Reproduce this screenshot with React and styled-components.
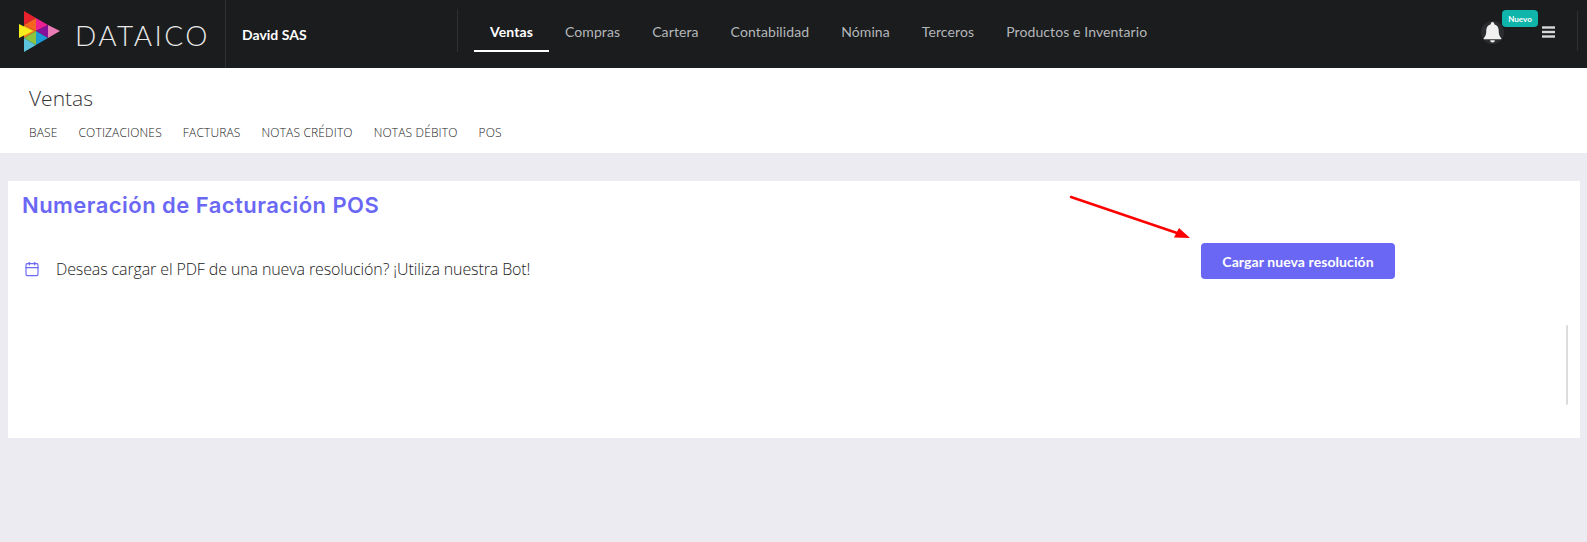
import React from 'react';
import styled, { createGlobalStyle } from 'styled-components';

const GlobalStyle = createGlobalStyle`
  html, body {
    margin: 0;
    padding: 0;
    background: #ecebf1;
    font-family: 'Open Sans', sans-serif;
  }
`;

const menu = ['Ventas', 'Compras', 'Cartera', 'Contabilidad', 'Nómina', 'Terceros', 'Productos e Inventario'];
const tabs = ['BASE', 'COTIZACIONES', 'FACTURAS', 'NOTAS CRÉDITO', 'NOTAS DÉBITO', 'POS'];

const triangles = [
  ['24,11 36,18 24,25', '#e7222c'],
  ['36,18 36,31 24,25', '#f5651f'],
  ['24,25 36,31 24,38', '#f5821f'],
  ['36,18 48,25 36,31', '#ec1f93'],
  ['48,25 48,38 36,31', '#86109a'],
  ['48,25 60,31 48,38', '#ea7cb5'],
  ['36,31 48,38 36,45', '#1c9ad6'],
  ['36,31 36,45 24,38', '#8cc63f'],
  ['24,38 36,45 24,52', '#5cc4dc'],
  ['19,24 33,31 19,38', '#f6ee1c'],
];

export default function App () {
  return (
    <Page>
      <GlobalStyle />
      <Header>
        <Brand>
          <svg width="62" height="68" viewBox="0 0 62 68" aria-hidden="true">
            {triangles.map(([points, fill]) => (
              <polygon key={points} points={points} fill={fill} />
            ))}
          </svg>
          <BrandName>DATAICO</BrandName>
        </Brand>
        <Company>David SAS</Company>
        <Menu>
          {menu.map((item, i) => (
            <MenuItem key={item} $active={i === 0}>{item}</MenuItem>
          ))}
        </Menu>
        <Tools>
          <Bell>
            <svg width="24" height="24" viewBox="0 0 24 24" fill="#f0f0f0" aria-hidden="true">
              <path d="M12 1.500a1.800 1.800 0 0 0-1.800 1.800v.6C7 4.700 5.500 7.300 5.500 10.500c0 4.500-1 6.200-2.700 7.900v1.100h18.400v-1.100c-1.700-1.700-2.700-3.400-2.700-7.900 0-3.200-1.500-5.800-4.700-6.600v-.6A1.800 1.800 0 0 0 12 1.500z" />
              <path d="M9.500 20.500a2.500 2.500 0 0 0 5 0z" />
            </svg>
          </Bell>
          <Badge>Nuevo</Badge>
          <Burger width="13" height="12" viewBox="0 0 13 12" fill="#d8d8d8" aria-hidden="true">
            <rect y="0.300" width="13" height="2.400" />
            <rect y="4.800" width="13" height="2.400" />
            <rect y="9.300" width="13" height="2.400" />
          </Burger>
          <ToolsEdge />
        </Tools>
      </Header>

      <SubHeader>
        <PageTitle>Ventas</PageTitle>
        <Tabs>
          {tabs.map(tab => (
            <Tab key={tab}>{tab}</Tab>
          ))}
        </Tabs>
      </SubHeader>

      <Card>
        <CardTitle>Numeración de Facturación POS</CardTitle>
        <CardRow>
          <Notice>
            <svg width="16" height="16" viewBox="0 0 24 24" fill="none" stroke="#6a67f5" strokeWidth="1.7" strokeLinecap="round" strokeLinejoin="round" aria-hidden="true">
              <rect x="3" y="4" width="18" height="18" rx="2" />
              <line x1="16" y1="2" x2="16" y2="6" />
              <line x1="8" y1="2" x2="8" y2="6" />
              <line x1="3" y1="10" x2="21" y2="10" />
            </svg>
            <NoticeText>Deseas cargar el PDF de una nueva resolución? ¡Utiliza nuestra Bot!</NoticeText>
          </Notice>
          <UploadButton>Cargar nueva resolución</UploadButton>
        </CardRow>
        <Arrow width="140" height="60" viewBox="0 0 140 60" aria-hidden="true">
          <line x1="2" y1="2" x2="111" y2="39" stroke="#fe0000" strokeWidth="2.500" strokeLinecap="round" />
          <polygon points="121,43 105,42.500 110,33" fill="#fe0000" />
        </Arrow>
        <ScrollEdge />
      </Card>
    </Page>
  );
}

const Page = styled.div`
  width: 1587px;
  height: 542px;
  overflow: hidden;
  background: #ecebf1;
`;

const Header = styled.header`
  display: flex;
  align-items: stretch;
  height: 68px;
  background: #1b1c1e;
`;

const Brand = styled.div`
  display: flex;
  align-items: center;
  width: 226px;
  box-sizing: border-box;
  border-right: 1px solid #2e2f32;
`;

const BrandName = styled.span`
  margin: 1px 0 0 13px;
  font-family: 'Lato', sans-serif;
  font-size: 28px;
  font-weight: 300;
  letter-spacing: 2.4px;
  color: #e8e8e8;
`;

const Company = styled.div`
  display: flex;
  align-items: center;
  width: 231px;
  box-sizing: border-box;
  padding-left: 16px;
  font-family: 'Lato', sans-serif;
  font-size: 14px;
  font-weight: 700;
  color: #fff;
`;

const Menu = styled.nav`
  display: flex;
  height: 43px;
  margin-top: 9px;
  padding-left: 16px;
  border-left: 1px solid #2e2f32;
`;

const MenuItem = styled.a`
  display: flex;
  align-items: center;
  height: 43px;
  padding: 3px 16px 0;
  box-sizing: border-box;
  border-bottom: 2px solid ${p => (p.$active ? '#fff' : 'transparent')};
  font-family: 'Lato', sans-serif;
  font-size: 14px;
  letter-spacing: 0.1px;
  font-weight: ${p => (p.$active ? 700 : 400)};
  color: ${p => (p.$active ? '#fff' : '#b4b7ba')};
`;

const Tools = styled.div`
  position: relative;
  display: flex;
  align-items: center;
  margin-left: auto;
  padding: 0 10px 4px 0;
`;

const Bell = styled.div`
  display: flex;
  align-items: center;
  justify-content: center;
  width: 23px;
  height: 23px;
  margin-right: 38px;
  border-radius: 50%;
  background: #2c2d30;
`;

const Badge = styled.span`
  position: absolute;
  top: 10px;
  right: 49px;
  display: flex;
  align-items: center;
  justify-content: center;
  width: 36px;
  height: 17px;
  border-radius: 4px;
  background: #0fb5ab;
  font-family: 'Lato', sans-serif;
  font-size: 8px;
  font-weight: 700;
  color: #fff;
`;

const Burger = styled.svg`
  margin-right: 22px;
`;

const ToolsEdge = styled.div`
  position: absolute;
  top: 11px;
  right: 9px;
  width: 1px;
  height: 40px;
  background: #2e2f32;
`;

const SubHeader = styled.section`
  height: 85px;
  box-sizing: border-box;
  padding: 17px 29px 0;
  background: #fff;
`;

const PageTitle = styled.h1`
  margin: 0;
  font-size: 21px;
  line-height: 27px;
  font-weight: 300;
  color: #333;
`;

const Tabs = styled.div`
  display: flex;
  gap: 21px;
  margin-top: 13px;
`;

const Tab = styled.a`
  font-size: 12px;
  line-height: 16px;
  font-weight: 300;
  letter-spacing: 0.15px;
  color: #222;
`;

const Card = styled.main`
  position: relative;
  height: 257px;
  margin: 28px 7px 0 8px;
  box-sizing: border-box;
  padding: 8px 14px 0;
  background: #fff;
`;

const CardTitle = styled.h2`
  margin: 0;
  font-family: 'Inter', sans-serif;
  font-size: 22px;
  line-height: 32px;
  font-weight: 600;
  letter-spacing: 0.45px;
  color: #6a67f5;
`;

const CardRow = styled.div`
  display: flex;
  align-items: flex-start;
  justify-content: space-between;
  padding: 22px 171px 0 2px;
`;

const Notice = styled.div`
  display: flex;
  align-items: center;
  gap: 16px;
  margin-top: 14px;
`;

const NoticeText = styled.span`
  font-size: 16px;
  line-height: 24px;
  font-weight: 300;
  letter-spacing: -0.12px;
  color: #222;
`;

const UploadButton = styled.button`
  width: 194px;
  height: 36px;
  border: 0;
  border-radius: 4px;
  background: #6a67f5;
  font-family: 'Lato', sans-serif;
  font-size: 14px;
  font-weight: 700;
  letter-spacing: 0.08px;
  color: #fff;
`;

const Arrow = styled.svg`
  position: absolute;
  top: 14px;
  left: 1061px;
`;

const ScrollEdge = styled.div`
  position: absolute;
  top: 144px;
  right: 12px;
  width: 2px;
  height: 80px;
  border-radius: 1px;
  background: #dcdcdc;
`;
